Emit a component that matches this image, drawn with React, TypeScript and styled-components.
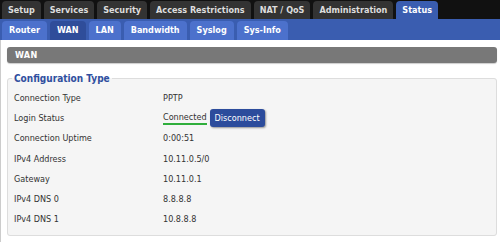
import { createGlobalStyle, styled } from 'styled-components';

const GlobalStyle = createGlobalStyle`
  html, body {
    margin: 0;
    padding: 0;
    background: #ffffff;
  }
  body {
    font-family: "DejaVu Sans Condensed", "DejaVu Sans", sans-serif;
    font-size: 9px;
    color: #333;
  }
`;

const mainTabs = [
  'Setup',
  'Services',
  'Security',
  'Access Restrictions',
  'NAT / QoS',
  'Administration',
  'Status',
];

const subTabs = ['Router', 'WAN', 'LAN', 'Bandwidth', 'Syslog', 'Sys-Info'];

const rows: { label: string; value: string; status?: boolean }[] = [
  { label: 'Connection Type', value: 'PPTP' },
  { label: 'Login Status', value: 'Connected', status: true },
  { label: 'Connection Uptime', value: '0:00:51' },
  { label: 'IPv4 Address', value: '10.11.0.5/0' },
  { label: 'Gateway', value: '10.11.0.1' },
  { label: 'IPv4 DNS 0', value: '8.8.8.8' },
  { label: 'IPv4 DNS 1', value: '10.8.8.8' },
];

export default function App() {
  return (
    <Page>
      <GlobalStyle />
      <MainBar>
        {mainTabs.map(t => (
          <MainTab key={t} $active={t === 'Status'}>
            {t}
          </MainTab>
        ))}
      </MainBar>
      <SubBar>
        {subTabs.map(t => (
          <SubTab key={t} $active={t === 'WAN'}>
            {t}
          </SubTab>
        ))}
      </SubBar>
      <Content>
        <SectionHeader>WAN</SectionHeader>
        <Fieldset>
          <Legend>Configuration Type</Legend>
          {rows.map(r => (
            <Row key={r.label}>
              <Label>{r.label}</Label>
              {r.status ? (
                <Value>
                  <Connected>{r.value}</Connected>
                  <Button>Disconnect</Button>
                </Value>
              ) : (
                <Value>{r.value}</Value>
              )}
            </Row>
          ))}
        </Fieldset>
      </Content>
    </Page>
  );
}

const Page = styled.div`
  width: 500px;
  height: 242px;
  overflow: hidden;
`;

const MainBar = styled.div`
  display: flex;
  align-items: flex-end;
  gap: 3px;
  height: 19px;
  padding: 0 2px;
  background: #111111;
`;

const MainTab = styled.div<{ $active?: boolean }>`
  height: 18px;
  line-height: 19px;
  padding: 0 6px;
  border-radius: 4px 4px 0 0;
  background: ${({ $active }) => ($active ? '#3a5db0' : '#333333')};
  color: ${({ $active }) => ($active ? '#ffffff' : '#dddddd')};
  font-weight: bold;
  font-size: 9px;
  white-space: nowrap;
`;

const SubBar = styled.div`
  display: flex;
  align-items: flex-end;
  gap: 3px;
  height: 21px;
  padding: 0 2px;
  background: #3a5db0;
`;

const SubTab = styled.div<{ $active?: boolean }>`
  height: 19px;
  line-height: 19px;
  padding: 0 7px;
  border-radius: 4px 4px 0 0;
  background: ${({ $active }) => ($active ? '#2f4d9a' : '#4c71cc')};
  color: #ffffff;
  font-weight: bold;
  font-size: 9px;
  white-space: nowrap;
`;

const Content = styled.div`
  height: 202px;
  padding: 7px 3px 0 6px;
  border-left: 1px solid #cccccc;
  background: #ffffff;
  box-sizing: border-box;
`;

const SectionHeader = styled.div`
  height: 16px;
  line-height: 16px;
  padding: 0 8px;
  border-radius: 3px;
  background: #787878;
  color: #ffffff;
  font-weight: bold;
  font-size: 9px;
  letter-spacing: 0.3px;
  box-shadow: 0 1px 1px rgba(0, 0, 0, 0.2);
`;

const Fieldset = styled.fieldset`
  margin: 10px 0 0;
  padding: 4px 6px 4px;
  border: 1px solid #dddddd;
  border-radius: 3px;
  background: #f5f5f5;
  height: 163px;
  box-sizing: border-box;
`;

const Legend = styled.legend`
  padding: 0 2px;
  margin-left: -2px;
  color: #2f4f9f;
  font-weight: bold;
  font-size: 10px;
`;

const Row = styled.div`
  display: flex;
  align-items: center;
  height: 20.2px;
`;

const Label = styled.div`
  width: 149px;
  color: #333333;
`;

const Value = styled.div`
  display: flex;
  align-items: center;
  gap: 3px;
  color: #333333;
`;

const Connected = styled.span`
  padding-bottom: 1px;
  border-bottom: 2px solid #2fae3c;
`;

const Button = styled.div`
  height: 18px;
  line-height: 18px;
  padding: 0 5px;
  border-radius: 3px;
  background: #2c4c9c;
  color: #ffffff;
  box-shadow: 1px 1px 2px rgba(0, 0, 0, 0.4);
`;
